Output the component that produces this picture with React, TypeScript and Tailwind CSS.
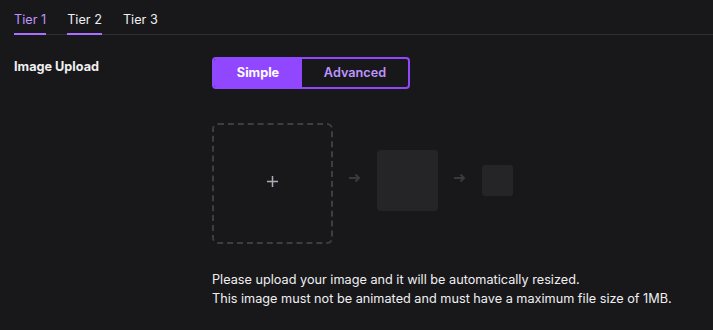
import React from "react";

function Arrow({ className }: { className?: string }) {
  return (
    <svg width="12" height="10" viewBox="0 0 12 10" className={"shrink-0 " + (className ?? "")}>
      <path d="M0 5H10M6.5 1.5L10 5L6.5 8.5" stroke="#3a3a3e" strokeWidth="2" fill="none" />
    </svg>
  );
}

export default function App() {
  return (
    <div
      className="w-[713px] h-[330px] bg-[#18181b] text-[#efeff1] overflow-hidden"
      style={{ fontFamily: "Inter, 'Noto Sans', sans-serif" }}
    >
      <div className="pl-[14px]">
        <div className="flex gap-[21px] border-b border-[#2f2f35] h-[35px]">
          <div className="relative pt-[10px] text-[12.7px] text-[#bf94ff]">
            Tier 1
            <div className="absolute left-0 right-0 bottom-[-1px] h-[2px] bg-[#a970ff]" />
          </div>
          <div className="relative pt-[10px] text-[12.7px]">
            Tier 2
            <div className="absolute left-0 right-0 bottom-[-1px] h-[2px] bg-[#a970ff]" />
          </div>
          <div className="relative pt-[10px] text-[12.7px]">Tier 3</div>
        </div>
        <div className="flex pt-[22px]">
          <div className="w-[198px] pt-0 text-[12.7px] font-bold">Image Upload</div>
          <div className="flex flex-col">
            <div className="flex w-[198px] h-[32px] rounded-[4px] border-2 border-[#9147ff] overflow-hidden">
              <div className="w-[88px] bg-[#9147ff] text-white font-bold text-[12.7px] flex items-center justify-center">
                Simple
              </div>
              <div className="flex-1 text-[#bf94ff] font-semibold text-[12.7px] flex items-center justify-center">
                Advanced
              </div>
            </div>
            <div className="flex items-start gap-[16px] mt-[34px]">
              <div className="w-[121px] h-[121px] rounded-[6px] border-2 border-dashed border-[#3d3d42] flex items-center justify-center">
                <svg width="11" height="11" viewBox="0 0 11 11" className="-mt-[4px]">
                  <path d="M5.5 0V11M0 5.5H11" stroke="#adadb8" strokeWidth="1.5" />
                </svg>
              </div>
              <Arrow className="mt-[50px]" />
              <div className="mt-[27px] w-[61px] h-[61px] rounded-[4px] bg-[#252528]" />
              <Arrow className="mt-[50px]" />
              <div className="mt-[42px] w-[31px] h-[31px] rounded-[3px] bg-[#252528]" />
            </div>
            <div className="mt-[26px] text-[12.7px] leading-[19px] text-[#efeff1]">
              <div>Please upload your image and it will be automatically resized.</div>
              <div>This image must not be animated and must have a maximum file size of 1MB.</div>
            </div>
          </div>
        </div>
      </div>
    </div>
  );
}
